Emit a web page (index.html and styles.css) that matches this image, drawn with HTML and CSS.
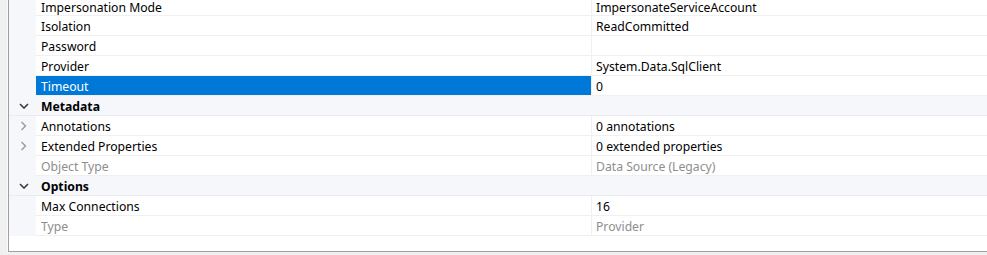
FILE: index.html
```html
<!DOCTYPE html>
<html>
<head>
<meta charset="utf-8">
<link rel="stylesheet" href="styles.css">
</head>
<body>
<div class="frame">
  <div class="grid">
    <div class="row first"><div class="gut"></div><div class="lab">Impersonation Mode</div><div class="val">ImpersonateServiceAccount</div></div>
    <div class="row"><div class="gut"></div><div class="lab">Isolation</div><div class="val">ReadCommitted</div></div>
    <div class="row"><div class="gut"></div><div class="lab">Password</div><div class="val"></div></div>
    <div class="row"><div class="gut"></div><div class="lab">Provider</div><div class="val">System.Data.SqlClient</div></div>
    <div class="row"><div class="gut"></div><div class="lab sel">Timeout</div><div class="val">0</div></div>
    <div class="row cat"><div class="gut"><svg class="chev" width="10" height="6" viewBox="0 0 10 6"><path d="M1 1 L5 5 L9 1" fill="none" stroke="#3c3c3c" stroke-width="1.6"/></svg></div><div class="catlab">Metadata</div></div>
    <div class="row"><div class="gut"><svg class="chevr" width="7" height="10" viewBox="0 0 7 10"><path d="M1.5 1 L5.5 5 L1.5 9" fill="none" stroke="#9a9a9a" stroke-width="1.4"/></svg></div><div class="lab">Annotations</div><div class="val">0 annotations</div></div>
    <div class="row"><div class="gut"><svg class="chevr" width="7" height="10" viewBox="0 0 7 10"><path d="M1.5 1 L5.5 5 L1.5 9" fill="none" stroke="#9a9a9a" stroke-width="1.4"/></svg></div><div class="lab">Extended Properties</div><div class="val">0 extended properties</div></div>
    <div class="row dim"><div class="gut"></div><div class="lab">Object Type</div><div class="val">Data Source (Legacy)</div></div>
    <div class="row cat"><div class="gut"><svg class="chev" width="10" height="6" viewBox="0 0 10 6"><path d="M1 1 L5 5 L9 1" fill="none" stroke="#3c3c3c" stroke-width="1.6"/></svg></div><div class="catlab">Options</div></div>
    <div class="row"><div class="gut"></div><div class="lab">Max Connections</div><div class="val">16</div></div>
    <div class="row dim"><div class="gut"></div><div class="lab">Type</div><div class="val">Provider</div></div>
  </div>
</div>
</body>
</html>
```
FILE: styles.css
```css
html, body {
  margin: 0;
  padding: 0;
  background: #f0f0f0;
  overflow: hidden;
}
body {
  width: 987px;
  height: 255px;
  font-family: "Noto Sans", "Liberation Sans", sans-serif;
  font-size: 12.2px;
  color: #000;
}
.frame {
  padding-left: 8px;
}
.grid {
  height: 252px;
  box-sizing: border-box;
  background: #fff;
  border-left: 1px solid #a0a0a0;
  border-bottom: 1px solid #a0a0a0;
  box-shadow: -1px 0 0 #fbfbfb;
}
.row {
  display: flex;
  height: 20px;
}
.row.first {
  height: 16px;
}
.gut {
  width: 27px;
  flex: none;
  background: #f5f7fb;
  display: flex;
  align-items: center;
  justify-content: center;
}
.lab {
  width: 556px;
  flex: none;
  box-sizing: border-box;
  padding-left: 5px;
  padding-top: 2px;
  line-height: 17px;
  height: 20px;
  border-bottom: 1px solid #f0f0f0;
  border-right: 1px solid #f0f0f0;
  white-space: nowrap;
}
.lab.sel {
  background: #0078d7;
  color: #fff;
}
.val {
  flex: 1;
  box-sizing: border-box;
  padding-left: 4px;
  padding-top: 2px;
  line-height: 17px;
  height: 20px;
  border-bottom: 1px solid #f0f0f0;
  white-space: nowrap;
}
.first .lab, .first .val {
  height: 16px;
  padding-top: 0;
  line-height: 15px;
}
.dim .lab, .dim .val {
  color: #8e8e8e;
}
.row.cat {
  background: #f5f7fb;
  border-bottom: 1px solid #e9ebef;
  box-sizing: border-box;
}
.cat .gut {
  background: transparent;
}
.catlab {
  flex: 1;
  padding-left: 5px;
  padding-top: 2px;
  line-height: 17px;
  font-weight: bold;
}
.chev {
  margin-left: 2px;
}
.chevr {
  margin-left: 2px;
}
```
